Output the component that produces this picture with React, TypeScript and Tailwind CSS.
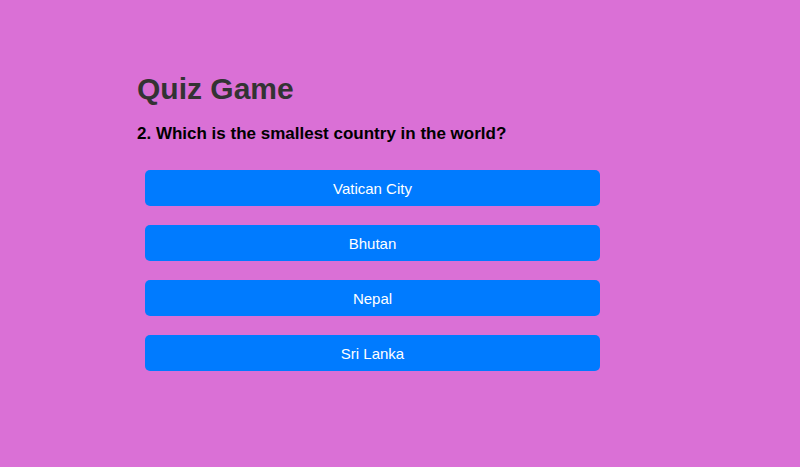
import React from "react";

const options = ["Vatican City", "Bhutan", "Nepal", "Sri Lanka"];

const App: React.FC = () => {
  return (
    <div className="min-h-screen w-full bg-[#da70d6] font-['Liberation_Sans',Arial,sans-serif]">
      <div className="pl-[137px] pt-[72px]">
        <h1 className="text-[30px] font-bold leading-[34px] text-[#333333]">
          Quiz Game
        </h1>
        <h2 className="mt-[18px] text-[17px] font-bold leading-[20px] text-black">
          2. Which is the smallest country in the world?
        </h2>
        <div className="mt-[26px] flex w-[455px] flex-col gap-[19px] pl-[8px] box-content">
          {options.map((option) => (
            <button
              key={option}
              className="h-[36px] w-[455px] rounded-[5px] bg-[#007bff] pt-[2px] text-[15px] text-white"
            >
              {option}
            </button>
          ))}
        </div>
      </div>
    </div>
  );
};

export default App;
